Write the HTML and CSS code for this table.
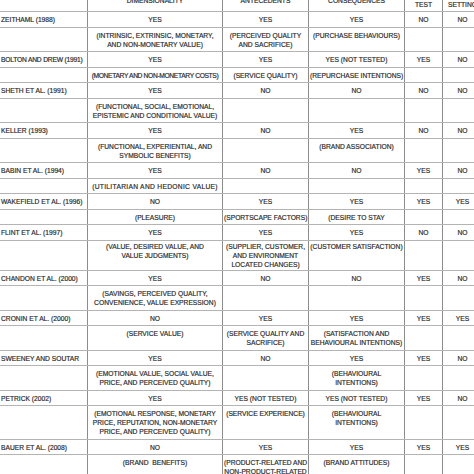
FILE: index.html
```html
<!DOCTYPE html>
<html>
<head>
<meta charset="utf-8">
<link rel="stylesheet" href="styles.css">
</head>
<body>
<div class="page">
<table class="grid">
<colgroup>
<col class="c-author"><col class="c-dim"><col class="c-ante"><col class="c-cons"><col class="c-test"><col class="c-set">
</colgroup>
<thead>
<tr>
<th class="author">AUTHOR(S)</th>
<th>VALUE<br>DIMENSIONALITY</th>
<th>VALUE<br>ANTECEDENTS</th>
<th>VALUE<br>CONSEQUENCES</th>
<th>TYPE<br>OF<br>TEST</th>
<th>IN<br>ONLINE<br>SETTING</th>
</tr>
</thead>
<tbody>
<tr><td>ZEITHAML (1988)</td><td>YES</td><td>YES</td><td>YES</td><td>NO</td><td>NO</td></tr>
<tr><td></td><td>(INTRINSIC, EXTRINSIC, MONETARY,<br>AND NON-MONETARY VALUE)</td><td>(PERCEIVED QUALITY<br>AND SACRIFICE)</td><td>(PURCHASE BEHAVIOURS)</td><td></td><td></td></tr>
<tr><td class="tight">BOLTON AND DREW (1991)</td><td>YES</td><td>YES</td><td>YES (NOT TESTED)</td><td>YES</td><td>NO</td></tr>
<tr><td></td><td class="tighter">(MONETARY AND NON-MONETARY COSTS)</td><td>(SERVICE QUALITY)</td><td>(REPURCHASE INTENTIONS)</td><td></td><td></td></tr>
<tr><td>SHETH ET AL. (1991)</td><td>YES</td><td>NO</td><td>NO</td><td>NO</td><td>NO</td></tr>
<tr><td></td><td>(FUNCTIONAL, SOCIAL, EMOTIONAL,<br>EPISTEMIC AND CONDITIONAL VALUE)</td><td></td><td></td><td></td><td></td></tr>
<tr><td>KELLER (1993)</td><td>YES</td><td>NO</td><td>YES</td><td>NO</td><td>NO</td></tr>
<tr><td></td><td>(FUNCTIONAL, EXPERIENTIAL, AND<br>SYMBOLIC BENEFITS)</td><td></td><td>(BRAND ASSOCIATION)</td><td></td><td></td></tr>
<tr><td>BABIN ET AL. (1994)</td><td>YES</td><td>NO</td><td>NO</td><td>YES</td><td>NO</td></tr>
<tr><td></td><td class="loose">(UTILITARIAN AND HEDONIC VALUE)</td><td></td><td></td><td></td><td></td></tr>
<tr><td>WAKEFIELD ET AL. (1996)</td><td>NO</td><td>YES</td><td>YES</td><td>YES</td><td>YES</td></tr>
<tr><td></td><td>(PLEASURE)</td><td>(SPORTSCAPE FACTORS)</td><td>(DESIRE TO STAY</td><td></td><td></td></tr>
<tr><td>FLINT ET AL. (1997)</td><td>YES</td><td>YES</td><td>YES</td><td>NO</td><td>NO</td></tr>
<tr class="snug"><td></td><td>(VALUE, DESIRED VALUE, AND<br>VALUE JUDGMENTS)</td><td>(SUPPLIER, CUSTOMER,<br>AND ENVIRONMENT<br>LOCATED CHANGES)</td><td>(CUSTOMER SATISFACTION)</td><td></td><td></td></tr>
<tr><td>CHANDON ET AL. (2000)</td><td>YES</td><td>NO</td><td>NO</td><td>YES</td><td>NO</td></tr>
<tr><td></td><td>(SAVINGS, PERCEIVED QUALITY,<br>CONVENIENCE, VALUE EXPRESSION)</td><td></td><td></td><td></td><td></td></tr>
<tr><td>CRONIN ET AL. (2000)</td><td>NO</td><td>YES</td><td>YES</td><td>YES</td><td>YES</td></tr>
<tr><td></td><td>(SERVICE VALUE)</td><td>(SERVICE QUALITY AND<br>SACRIFICE)</td><td>(SATISFACTION AND<br>BEHAVIOURAL INTENTIONS)</td><td></td><td></td></tr>
<tr><td>SWEENEY AND SOUTAR</td><td>YES</td><td>NO</td><td>YES</td><td>YES</td><td>NO</td></tr>
<tr><td></td><td>(EMOTIONAL VALUE, SOCIAL VALUE,<br>PRICE, AND PERCEIVED QUALITY)</td><td></td><td>(BEHAVIOURAL<br>INTENTIONS)</td><td></td><td></td></tr>
<tr><td>PETRICK (2002)</td><td>YES</td><td>YES (NOT TESTED)</td><td>YES (NOT TESTED)</td><td>YES</td><td>NO</td></tr>
<tr><td></td><td>(EMOTIONAL RESPONSE, MONETARY<br>PRICE, REPUTATION, NON-MONETARY<br>PRICE, AND PERCEIVED QUALITY)</td><td>(SERVICE EXPERIENCE)</td><td>(BEHAVIOURAL<br>INTENTIONS)</td><td></td><td></td></tr>
<tr><td>BAUER ET AL. (2008)</td><td>NO</td><td>YES</td><td>YES</td><td>YES</td><td>YES</td></tr>
<tr><td></td><td>(BRAND&nbsp; BENEFITS)</td><td>(PRODUCT-RELATED AND<br>NON-PRODUCT-RELATED<br>ATTRIBUTES)</td><td>(BRAND ATTITUDES)</td><td></td><td></td></tr>
</tbody>
</table>
</div>
</body>
</html>
```
FILE: styles.css
```css
body {
  margin: 0;
  background: #ffffff;
}

.page {
  width: 474px;
  height: 474px;
  overflow: hidden;
}

.grid {
  border-collapse: collapse;
  table-layout: fixed;
  width: 482px;
  margin-top: -20px;
  font-family: "Liberation Sans", Arial, sans-serif;
  font-size: 6.7px;
  line-height: 9px;
  color: #2a2a2a;
  -webkit-text-stroke: 0.18px #2a2a2a;
}

.c-author { width: 87.5px; }
.c-dim { width: 135px; }
.c-ante { width: 86px; }
.c-cons { width: 96px; }
.c-test { width: 38px; }
.c-set { width: 39.5px; }

.grid td,
.grid th {
  padding: 3px 1px 2.5px;
  border-left: 1px solid #8c8c8c;
  border-bottom: 1px solid #b4b4b4;
  text-align: center;
  vertical-align: top;
  font-weight: normal;
  white-space: nowrap;
  overflow: hidden;
}

.grid th {
  vertical-align: middle;
  padding: 2px 1px;
}

.grid td:first-child,
.grid th:first-child {
  text-align: left;
  border-left: none;
  padding-left: 1px;
}

.grid .snug td {
  padding-top: 1.5px;
  padding-bottom: 0.5px;
}

.grid .tight {
  letter-spacing: -0.2px;
}

.grid .tighter {
  letter-spacing: -0.35px;
}

.grid .loose {
  letter-spacing: 0.3px;
}
```
